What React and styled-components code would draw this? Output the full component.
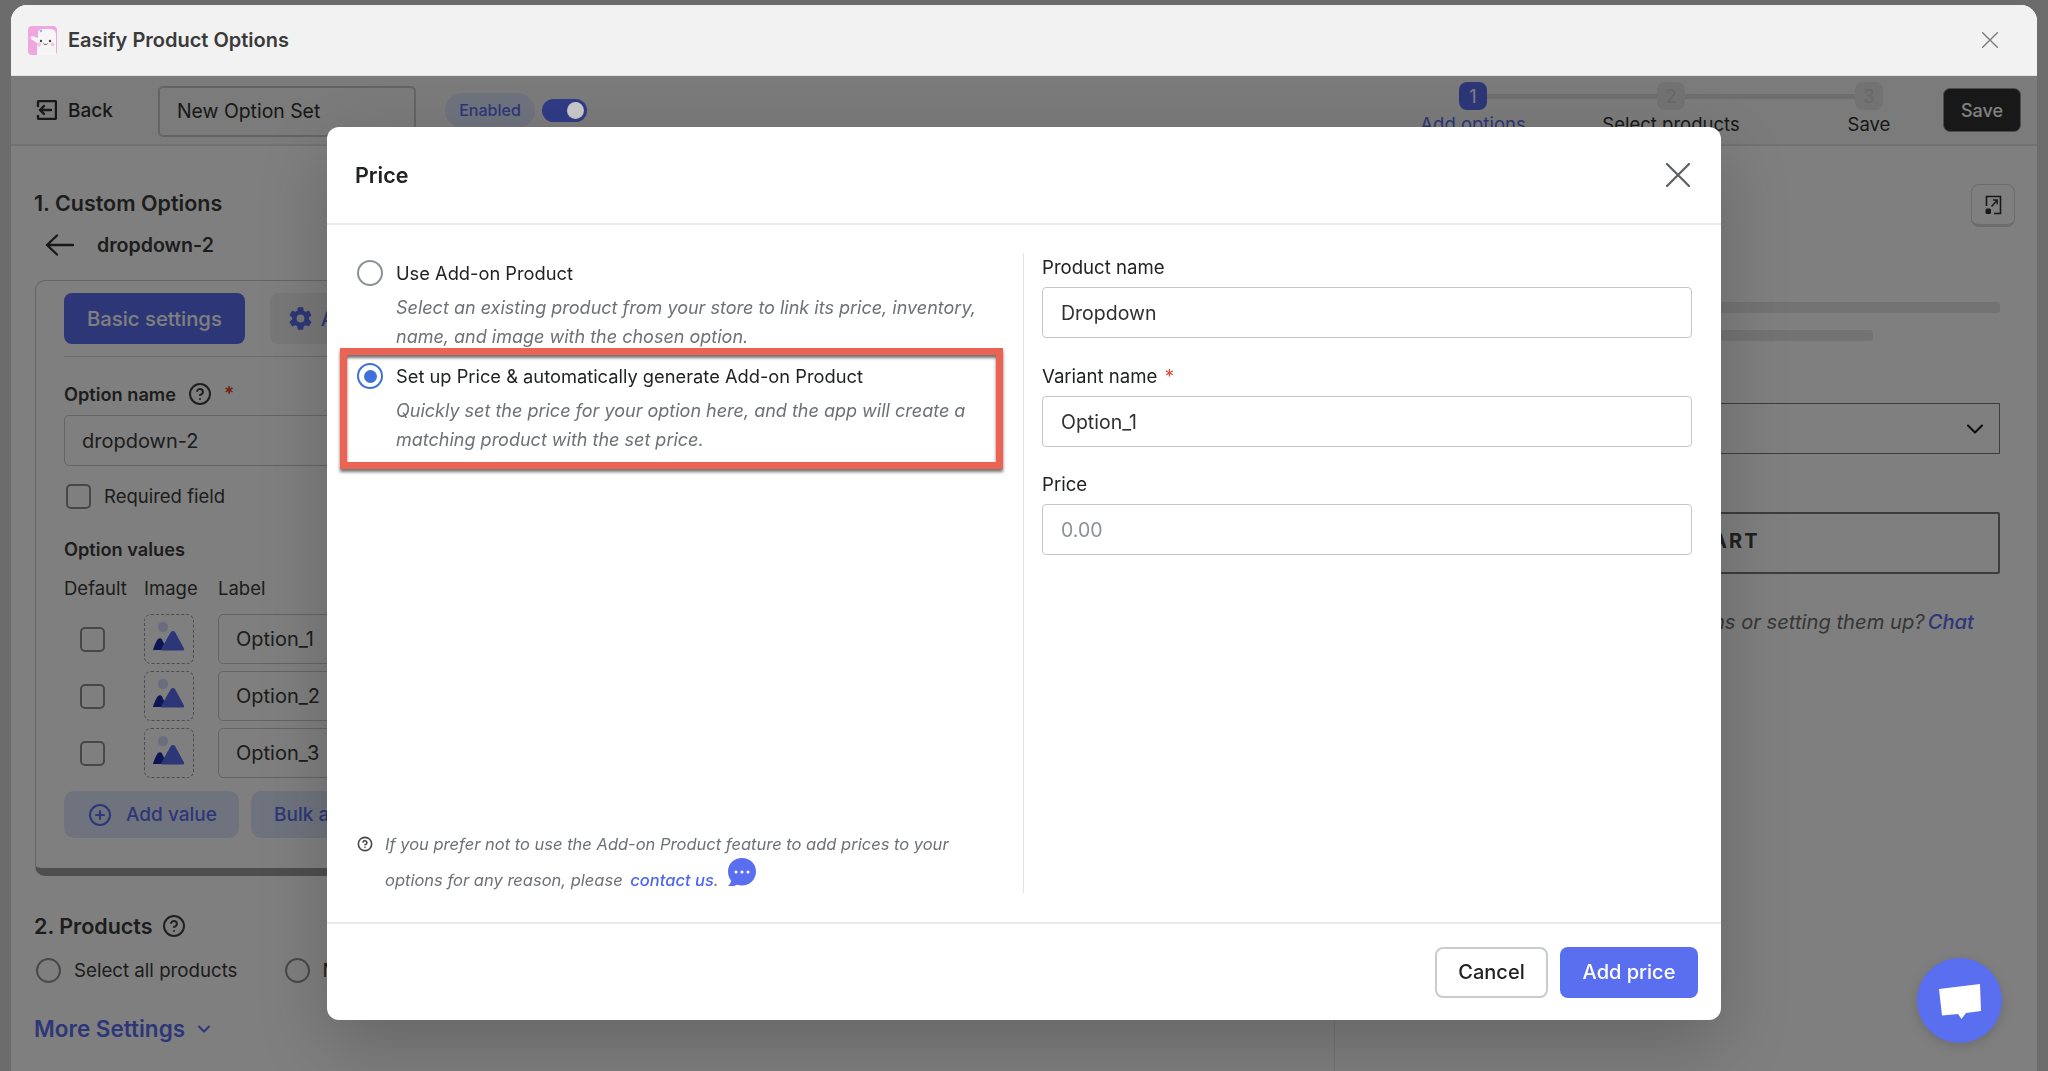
import React from "react";
import styled, { createGlobalStyle } from "styled-components";
import { ChevronDown, CircleHelp, CirclePlus } from "lucide-react";
import { IoSettingsSharp } from "react-icons/io5";

const primary = "#5a6ef0";

const Global = createGlobalStyle`
  html, body { margin: 0; padding: 0; height: 100%; background: #6c6c6c; overflow: hidden; }
  body, input, button { font-family: Inter, "Liberation Sans", sans-serif; }
  * { box-sizing: border-box; }
`;

const Page = styled.div`
  width: 2048px;
  height: 1071px;
  padding: 5px 11px 0;
  overflow: hidden;
`;
const Win = styled.div`
  height: 1066px;
  border-radius: 16px 16px 0 0;
  overflow: hidden;
  background: #fff;
  display: flex;
  flex-direction: column;
`;
const WinHeader = styled.header`
  height: 71px;
  flex: none;
  background: #f2f2f2;
  border-bottom: 1px solid #e3e3e3;
  display: flex;
  align-items: center;
  padding: 0 39px 0 17px;
  gap: 11px;
`;
const WinTitle = styled.div`
  font-size: 20px;
  font-weight: 600;
  color: #3a3a3a;
  flex: 1;
`;
const WinBody = styled.div`
  position: relative;
  flex: 1;
  display: flex;
  flex-direction: column;
  background: #fff;
  min-height: 0;
`;
const Dim = styled.div`
  position: absolute;
  inset: 0;
  z-index: 1;
  background: rgba(0, 0, 0, 0.5);
`;
const Toolbar = styled.div`
  height: 70px;
  flex: none;
  background: #f6f6f6;
  border-bottom: 2px solid #e4e4e4;
  display: flex;
  align-items: center;
  padding: 0 16px 0 25px;
`;
const BackLink = styled.div`
  display: flex;
  align-items: center;
  gap: 11px;
  width: 122px;
  font-size: 19px;
  color: #303030;
  font-weight: 500;
`;
const NameInput = styled.div`
  width: 258px;
  height: 51px;
  margin-top: 2px;
  border: 2px solid #c9c9c9;
  border-radius: 5px;
  padding: 0 17px;
  display: flex;
  align-items: center;
  font-size: 19.4px;
  color: #303030;
`;
const Pill = styled.div`
  width: 90px;
  height: 35px;
  margin-left: 29px;
  border-radius: 18px;
  background: #dfe6fb;
  color: ${primary};
  font-size: 16px;
  font-weight: 500;
  display: flex;
  align-items: center;
  justify-content: center;
`;
const Toggle = styled.div`
  position: relative;
  z-index: 2;
  width: 45px;
  height: 23px;
  margin-left: 7px;
  border-radius: 12px;
  background: #2f3b85;
  display: flex;
  align-items: center;
  justify-content: flex-end;
  padding-right: 3px;
`;
const Knob = styled.div`
  width: 17px;
  height: 17px;
  border-radius: 50%;
  background: #c9c9c9;
`;
const Stepper = styled.div`
  margin-left: auto;
  margin-right: 60px;
  align-self: flex-start;
  margin-top: 6px;
  display: flex;
  align-items: flex-start;
`;
const Step = styled.div`
  width: 28px;
  display: flex;
  flex-direction: column;
  align-items: center;
`;
const StepNum = styled.div`
  width: 28px;
  height: 28px;
  flex: none;
  border-radius: 8px;
  background: ${(p) => (p.$active ? primary : "#e4e4e4")};
  color: ${(p) => (p.$active ? "#fff" : "#d0d0d0")};
  font-size: 18px;
  display: flex;
  align-items: center;
  justify-content: center;
`;
const StepLabel = styled.div`
  margin-top: 3px;
  line-height: 22px;
  white-space: nowrap;
  font-size: 18.5px;
  color: ${(p) => (p.$active ? primary : "#303030")};
`;
const StepLine = styled.div`
  width: 170px;
  height: 5px;
  margin-top: 12px;
  background: #dcdcdc;
`;
const SaveBtn = styled.div`
  width: 78px;
  height: 44px;
  border-radius: 7px;
  background: #303030;
  border: 1px solid #9a9a9a;
  color: #fff;
  font-size: 18px;
  font-weight: 500;
  display: flex;
  align-items: center;
  justify-content: center;
`;
const Columns = styled.div`
  flex: 1;
  display: flex;
  min-height: 0;
`;
const LeftCol = styled.div`
  width: 1324px;
  flex: none;
  padding: 45px 24px 0;
  border-right: 1px solid #e6e6e6;
`;
const SectionTitle = styled.h2`
  margin: ${(p) => p.$mt || 0}px 0 0 -1px;
  font-size: 21.5px;
  line-height: 24px;
  font-weight: 600;
  color: #3a3a3a;
  display: flex;
  align-items: center;
  gap: 9px;
`;
const BackRow = styled.div`
  margin-top: 15px;
  height: 30px;
  padding-left: 10px;
  display: flex;
  align-items: center;
  gap: 23px;
  font-size: 19.6px;
  font-weight: 600;
  color: #3a3a3a;
`;
const Panel = styled.section`
  margin-top: 20px;
  border: 1px solid #c8c8c8;
  border-bottom: 8px solid #9c9c9c;
  border-radius: 10px;
  padding: 12px 28px 30px;
`;
const Tabs = styled.div`
  display: flex;
  gap: 25px;
  padding-bottom: 12px;
  border-bottom: 1px solid #d8d8d8;
`;
const Tab = styled.div`
  height: 51px;
  padding: ${(p) => (p.$active ? "0 23px" : "0 18px")};
  border-radius: 8px;
  background: ${(p) => (p.$active ? primary : "#f1f1f1")};
  color: ${(p) => (p.$active ? "#fff" : primary)};
  font-size: 20.3px;
  font-weight: 500;
  display: flex;
  align-items: center;
  gap: 8px;
`;
const FieldLabel = styled.div`
  margin-top: ${(p) => p.$mt}px;
  font-size: 18.2px;
  line-height: 22px;
  font-weight: 600;
  color: #3a3a3a;
  display: flex;
  align-items: center;
  gap: 12px;
`;
const Star = styled.span`
  color: #e0452f;
  font-size: 19px;
`;
const BgInput = styled.div`
  height: ${(p) => p.$h || 51}px;
  margin-top: ${(p) => p.$mt || 0}px;
  flex: 1;
  border: 1px solid #c9c9c9;
  border-radius: 5px;
  padding: 0 17px;
  display: flex;
  align-items: center;
  font-size: 20px;
  color: #3a3a3a;
`;
const CheckRow = styled.div`
  margin-top: 17px;
  height: 26px;
  padding-left: 2px;
  display: flex;
  align-items: center;
  gap: 13px;
  font-size: 18.5px;
  color: #3a3a3a;
`;
const Check = styled.div`
  width: 25px;
  height: 25px;
  flex: none;
  border: 2px solid #8f8f8f;
  border-radius: 5px;
`;
const ValuesHead = styled.div`
  margin-top: 17px;
  display: grid;
  grid-template-columns: 80px 74px 1fr;
  font-size: 18.5px;
  line-height: 22px;
  color: #3a3a3a;
`;
const ValueRows = styled.div`
  margin-top: 15px;
  display: flex;
  flex-direction: column;
  gap: 7px;
`;
const ValueRow = styled.div`
  display: grid;
  grid-template-columns: 80px 74px 1fr;
  align-items: center;
  height: 50px;
`;
const CheckCell = styled.div`
  padding-left: 16px;
`;
const ImageBox = styled.div`
  width: 50px;
  height: 50px;
  border: 1px dashed #9a9a9a;
  border-radius: 7px;
  display: flex;
  align-items: center;
  justify-content: center;
`;
const ValueActions = styled.div`
  margin-top: 13px;
  display: flex;
  gap: 12px;
`;
const SoftBtn = styled.div`
  height: 47px;
  width: ${(p) => p.$w}px;
  padding-left: ${(p) => p.$pl}px;
  border-radius: 10px;
  background: #dfe6fb;
  color: ${primary};
  font-size: 19px;
  font-weight: 500;
  display: flex;
  align-items: center;
  gap: 14px;
`;
const RadioRow = styled.div`
  margin-top: 19px;
  height: 26px;
  padding-left: 1px;
  display: flex;
  align-items: center;
  font-size: 18.7px;
  color: #3a3a3a;
  gap: 13px;
`;
const SecondRadio = styled.div`
  margin-left: 34px;
  display: flex;
  align-items: center;
  gap: 13px;
`;
const Radio = styled.span`
  width: ${(p) => p.$size || 26}px;
  height: ${(p) => p.$size || 26}px;
  flex: none;
  border-radius: 50%;
  border: 2px solid ${(p) => (p.$on ? "#3f6fd8" : "#8c9196")};
  display: inline-flex;
  align-items: center;
  justify-content: center;
  &::after {
    content: "";
    width: 13px;
    height: 13px;
    border-radius: 50%;
    background: ${(p) => (p.$on ? "#3f6fd8" : "transparent")};
  }
`;
const MoreSettings = styled.div`
  margin: 32px 0 0 -1px;
  line-height: 28px;
  font-size: 22.5px;
  font-weight: 600;
  color: ${primary};
  display: flex;
  align-items: center;
  gap: 9px;
`;
const RightCol = styled.div`
  flex: 1;
  padding: 38px 22px 0 25px;
  display: flex;
  flex-direction: column;
`;
const ExpandBtn = styled.div`
  width: 44px;
  height: 43px;
  align-self: flex-end;
  border: 1px solid #d8d8d8;
  border-bottom-width: 3px;
  border-radius: 8px;
  display: flex;
  align-items: center;
  justify-content: center;
`;
const Preview = styled.div`
  margin-right: 15px;
`;
const Bar = styled.div`
  height: 11px;
  border-radius: 3px;
  background: #e6e6e6;
  margin-top: ${(p) => p.$mt}px;
  width: ${(p) => p.$w};
`;
const FakeSelect = styled.div`
  height: 51px;
  margin-top: 62px;
  border: 1px solid #7a7a7a;
  display: flex;
  align-items: center;
  justify-content: flex-end;
  padding-right: 10px;
`;
const CartBtn = styled.div`
  height: 62px;
  margin-top: 58px;
  border: 2px solid #7a7a7a;
  border-radius: 2px;
  font-size: 20px;
  font-weight: 700;
  letter-spacing: 2px;
  color: #404040;
  display: flex;
  align-items: center;
  justify-content: center;
  padding-bottom: 4px;
`;
const HelpLine = styled.div`
  margin-top: 33px;
  padding-right: 26px;
  text-align: right;
  font-size: 20.2px;
  line-height: 30px;
  font-style: italic;
  color: #6d6d6d;
`;
const ChatLink = styled.span`
  color: ${primary};
  font-weight: 500;
  margin-left: 3px;
`;
const ModalLayer = styled.div`
  position: fixed;
  inset: 0;
  z-index: 5;
  display: flex;
  justify-content: center;
  align-items: flex-start;
  padding-top: 127px;
`;
const Modal = styled.div`
  width: 1394px;
  height: 893px;
  background: #fff;
  border-radius: 12px;
  box-shadow: 0 26px 70px rgba(0, 0, 0, 0.2);
  display: flex;
  flex-direction: column;
`;
const ModalHead = styled.div`
  height: 98px;
  flex: none;
  border-bottom: 2px solid #ebebeb;
  padding: 0 31px 0 28px;
  display: flex;
  align-items: center;
  justify-content: space-between;
`;
const ModalTitle = styled.h1`
  margin: 0;
  font-size: 21.5px;
  font-weight: 600;
  color: #202223;
`;
const ModalBody = styled.div`
  flex: 1;
  min-height: 0;
  padding: 28px 29px 29px 28px;
  display: flex;
`;
const Choices = styled.div`
  width: 669px;
  flex: none;
  border-right: 1px solid #e1e3e5;
  display: flex;
  flex-direction: column;
`;
const Option = styled.div`
  position: relative;
  margin-top: ${(p) => p.$mt}px;
`;
const OptionHead = styled.div`
  height: 26px;
  margin-left: 2px;
  display: flex;
  align-items: center;
  gap: 13px;
  font-size: 18.3px;
  color: #202223;
`;
const OptionDesc = styled.p`
  margin: 7px 0 0 41px;
  font-size: 18px;
  line-height: 29px;
  font-style: italic;
  color: #6d7175;
  white-space: pre-line;
`;
const Highlight = styled.div`
  position: absolute;
  top: -15px;
  left: -15px;
  width: 663px;
  height: 121px;
  border: 7px solid #ec6354;
  box-shadow: 0 3px 3px rgba(0, 0, 0, 0.55), inset 0 3px 3px rgba(0, 0, 0, 0.55);
  pointer-events: none;
`;
const Note = styled.div`
  margin-top: auto;
  margin-bottom: -5px;
  margin-left: 2px;
  display: flex;
  gap: 12px;
`;
const NoteIcon = styled.div`
  height: 36px;
  display: flex;
  align-items: center;
  color: #4a4a4a;
`;
const NoteText = styled.div`
  font-size: 16.5px;
  line-height: 36px;
  font-style: italic;
  color: #6d7175;
  white-space: pre-line;
`;
const ContactLink = styled.span`
  color: #4f66f0;
  font-weight: 500;
  margin-left: 3px;
`;
const BubbleWrap = styled.span`
  display: inline-block;
  width: 29px;
  height: 16px;
  margin-left: 8px;
  vertical-align: -2px;
  svg {
    display: block;
    margin-top: -14px;
  }
`;
const Fields = styled.div`
  flex: 1;
  padding-left: 18px;
  padding-top: 2px;
`;
const ModalLabel = styled.div`
  margin-top: ${(p) => p.$mt || 0}px;
  font-size: 18.6px;
  line-height: 24px;
  color: #202223;
`;
const Req = styled.span`
  color: #e0452f;
  margin-left: 2px;
`;
const ModalInput = styled.div`
  height: 51px;
  margin-top: 8px;
  border: 1px solid #c4c7ca;
  border-radius: 4px;
  padding: 0 18px;
  display: flex;
  align-items: center;
  font-size: 19.5px;
  color: ${(p) => (p.$placeholder ? "#8c9196" : "#303030")};
`;
const ModalFoot = styled.div`
  height: 98px;
  flex: none;
  border-top: 2px solid #ebebeb;
  padding-right: 23px;
  display: flex;
  align-items: center;
  justify-content: flex-end;
  gap: 12px;
`;
const FootBtn = styled.div`
  height: 51px;
  width: ${(p) => p.$w}px;
  border-radius: 8px;
  border: ${(p) => (p.$primary ? "none" : "2px solid #c9cccf")};
  background: ${(p) => (p.$primary ? primary : "#fff")};
  color: ${(p) => (p.$primary ? "#fff" : "#202223")};
  font-size: 20px;
  font-weight: 500;
  display: flex;
  align-items: center;
  justify-content: center;
`;
const ChatFab = styled.div`
  position: fixed;
  z-index: 6;
  left: 1917px;
  top: 958px;
  width: 85px;
  height: 85px;
  border-radius: 50%;
  background: ${primary};
  box-shadow: 0 3px 12px rgba(0, 0, 0, 0.15);
  display: flex;
  align-items: center;
  justify-content: center;
  padding-top: 3px;
`;

const CrossIcon = ({ size, color, width }) => (
  <svg width={size} height={size} viewBox="0 0 24 24" fill="none">
    <path d="M1 1L23 23M23 1L1 23" stroke={color} strokeWidth={width} strokeLinecap="round" />
  </svg>
);

const BackArrow = () => (
  <svg width="29" height="22" viewBox="0 0 29 22" fill="none" stroke="#303030" strokeWidth="2.4" strokeLinecap="round" strokeLinejoin="round">
    <path d="M28 11H2M12 1.5L2 11l10 9.5" />
  </svg>
);

const Logo = () => (
  <svg width="29" height="29" viewBox="0 0 29 29">
    <rect width="29" height="29" rx="4" fill="#f0a6de" />
    <path d="M10 6c0-2 3-3 6-3h6c4 0 6 2 6 6v20H9V17L3 13c-1-1 0-3 1-3l6 2z" fill="#f7f5f6" />
    <circle cx="13" cy="5" r="1.3" fill="#8fb7f0" />
    <circle cx="13" cy="15" r="1.2" fill="#444" />
    <circle cx="22" cy="15" r="1.2" fill="#444" />
    <path d="M15.5 17.5c1 1.4 3 1.4 4 0" stroke="#444" strokeWidth="1" fill="none" />
    <circle cx="11" cy="18.5" r="2" fill="#f7c3df" />
    <circle cx="24.5" cy="18.5" r="2" fill="#f7c3df" />
  </svg>
);

const BackIcon = () => (
  <svg width="21" height="20" viewBox="0 0 21 20" fill="none" stroke="#303030" strokeWidth="2.4" strokeLinecap="round" strokeLinejoin="round">
    <path d="M2 6V2.2C2 1.5 2.5 1 3.2 1h15.6c.7 0 1.2.5 1.2 1.2v15.6c0 .7-.5 1.2-1.2 1.2H3.2C2.5 19 2 18.5 2 17.8V16" />
    <path d="M15 10H4M8 6l-4 4 4 4" />
  </svg>
);

const ImageIcon = () => (
  <svg width="34" height="38" viewBox="0 0 34 38">
    <circle cx="11" cy="7" r="5.2" fill="#d6dbfb" />
    <path d="M1 30c0-1 3-9 5-11 1-1 3-1 4 .5l5 10.5z" fill="#1c2aa8" />
    <path d="M9 30c0-.6 9-17 10-18 1-1.4 3-1.4 4 0l9 16.5c.5 1 0 2-1 2H10c-.8 0-1-.2-1-.5z" fill="#5a6ef0" />
  </svg>
);

const ExpandIcon = () => (
  <svg width="17" height="20" viewBox="0 0 17 20" fill="none" stroke="#303030" strokeWidth="1.6">
    <path d="M1.5 11V1.5h14v17H9" />
    <path d="M6.5 11.5l5.500-6M8 5h4.200v4.200" strokeWidth="1.4" />
    <rect x="0.5" y="13.5" width="5.5" height="5.5" rx="1.5" fill="#303030" stroke="none" />
  </svg>
);

const Bubble = () => (
  <svg width="29" height="29" viewBox="0 0 29 29">
    <path d="M15 0C7 0 1 5.700 1 13.500c0 3.500 1.200 6.700 3.200 9.200C3.800 25 2 27 1 28h5c1.800 0 3-1 4-1.300 1.500.5 3.200.8 5 .8 7.800 0 14-6 14-14S22.800 0 15 0z" fill={primary} />
    <circle cx="9" cy="14" r="1.5" fill="#fff" />
    <circle cx="15" cy="14" r="1.5" fill="#fff" />
    <circle cx="21" cy="14" r="1.5" fill="#fff" />
  </svg>
);

const ChatIcon = () => (
  <svg width="42" height="36" viewBox="0 0 42 36">
    <path d="M0 5L41 0l1 27-15 2-4.500 6-3.500-5-16 1.500z" fill="#fff" />
  </svg>
);

export default function App() {
  return (
    <Page>
      <Global />
      <Win>
        <WinHeader>
          <Logo />
          <WinTitle>Easify Product Options</WinTitle>
          <CrossIcon size={16} color="#7a7a7a" width={2} />
        </WinHeader>
        <WinBody>
          <Toolbar>
            <BackLink>
              <BackIcon />
              Back
            </BackLink>
            <NameInput>New Option Set</NameInput>
            <Pill>Enabled</Pill>
            <Toggle>
              <Knob />
            </Toggle>
            <Stepper>
              <Step>
                <StepNum $active>1</StepNum>
                <StepLabel $active>Add options</StepLabel>
              </Step>
              <StepLine />
              <Step>
                <StepNum>2</StepNum>
                <StepLabel>Select products</StepLabel>
              </Step>
              <StepLine />
              <Step>
                <StepNum>3</StepNum>
                <StepLabel>Save</StepLabel>
              </Step>
            </Stepper>
            <SaveBtn>Save</SaveBtn>
          </Toolbar>
          <Columns>
            <LeftCol>
              <SectionTitle>1. Custom Options</SectionTitle>
              <BackRow>
                <BackArrow />
                dropdown-2
              </BackRow>
              <Panel>
                <Tabs>
                  <Tab $active>Basic settings</Tab>
                  <Tab>
                    <IoSettingsSharp size={25} />
                    Advanced settings
                  </Tab>
                </Tabs>
                <FieldLabel $mt={25}>
                  Option name
                  <CircleHelp size={24} strokeWidth={2} color="#404040" />
                  <Star>*</Star>
                </FieldLabel>
                <BgInput $mt={9}>dropdown-2</BgInput>
                <CheckRow>
                  <Check />
                  Required field
                </CheckRow>
                <FieldLabel $mt={29}>Option values</FieldLabel>
                <ValuesHead>
                  <span>Default</span>
                  <span>Image</span>
                  <span>Label</span>
                </ValuesHead>
                <ValueRows>
                  {["Option_1", "Option_2", "Option_3"].map((v) => (
                    <ValueRow key={v}>
                      <CheckCell>
                        <Check />
                      </CheckCell>
                      <ImageBox>
                        <ImageIcon />
                      </ImageBox>
                      <BgInput $h={50}>{v}</BgInput>
                    </ValueRow>
                  ))}
                </ValueRows>
                <ValueActions>
                  <SoftBtn $w={175} $pl={24}>
                    <CirclePlus size={24} strokeWidth={2} />
                    Add value
                  </SoftBtn>
                  <SoftBtn $w={170} $pl={23}>Bulk add</SoftBtn>
                </ValueActions>
              </Panel>
              <SectionTitle $mt={38}>
                2. Products
                <CircleHelp size={24} strokeWidth={2} color="#404040" />
              </SectionTitle>
              <RadioRow>
                <Radio $size={25} />
                Select all products
                <SecondRadio>
                  <Radio $size={25} />
                  Manually select
                </SecondRadio>
              </RadioRow>
              <MoreSettings>
                More Settings
                <ChevronDown size={20} strokeWidth={2.4} />
              </MoreSettings>
            </LeftCol>
            <RightCol>
              <ExpandBtn>
                <ExpandIcon />
              </ExpandBtn>
              <Preview>
                <Bar $mt={75} $w="100%" />
                <Bar $mt={17} $w="513px" />
                <FakeSelect>
                  <ChevronDown size={28} strokeWidth={1.8} color="#1c1c1c" />
                </FakeSelect>
                <CartBtn>ADD TO CART</CartBtn>
                <HelpLine>
                  Any issues with options or setting them up?
                  <ChatLink>Chat</ChatLink>
                </HelpLine>
              </Preview>
            </RightCol>
          </Columns>
          <Dim />
        </WinBody>
      </Win>
      <ModalLayer>
        <Modal>
          <ModalHead>
            <ModalTitle>Price</ModalTitle>
            <CrossIcon size={24} color="#5c5f62" width={2.2} />
          </ModalHead>
          <ModalBody>
            <Choices>
              <Option $mt={7}>
                <OptionHead>
                  <Radio />
                  Use Add-on Product
                </OptionHead>
                <OptionDesc>
                  {"Select an existing product from your store to link its price, inventory,\nname, and image with the chosen option."}
                </OptionDesc>
              </Option>
              <Option $mt={12}>
                <OptionHead>
                  <Radio $on />
                  Set up Price &amp; automatically generate Add-on Product
                </OptionHead>
                <OptionDesc>
                  {"Quickly set the price for your option here, and the app will create a\nmatching product with the set price."}
                </OptionDesc>
                <Highlight />
              </Option>
              <Note>
                <NoteIcon>
                  <CircleHelp size={16} strokeWidth={2.4} />
                </NoteIcon>
                <NoteText>
                  {"If you prefer not to use the Add-on Product feature to add prices to your\noptions for any reason, please "}
                  <ContactLink>contact us</ContactLink>.
                  <BubbleWrap>
                    <Bubble />
                  </BubbleWrap>
                </NoteText>
              </Note>
            </Choices>
            <Fields>
              <ModalLabel>Product name</ModalLabel>
              <ModalInput>Dropdown</ModalInput>
              <ModalLabel $mt={26}>
                Variant name <Req>*</Req>
              </ModalLabel>
              <ModalInput>Option_1</ModalInput>
              <ModalLabel $mt={25}>Price</ModalLabel>
              <ModalInput $placeholder>0.00</ModalInput>
            </Fields>
          </ModalBody>
          <ModalFoot>
            <FootBtn $w={113}>Cancel</FootBtn>
            <FootBtn $primary $w={138}>Add price</FootBtn>
          </ModalFoot>
        </Modal>
      </ModalLayer>
      <ChatFab>
        <ChatIcon />
      </ChatFab>
    </Page>
  );
}
